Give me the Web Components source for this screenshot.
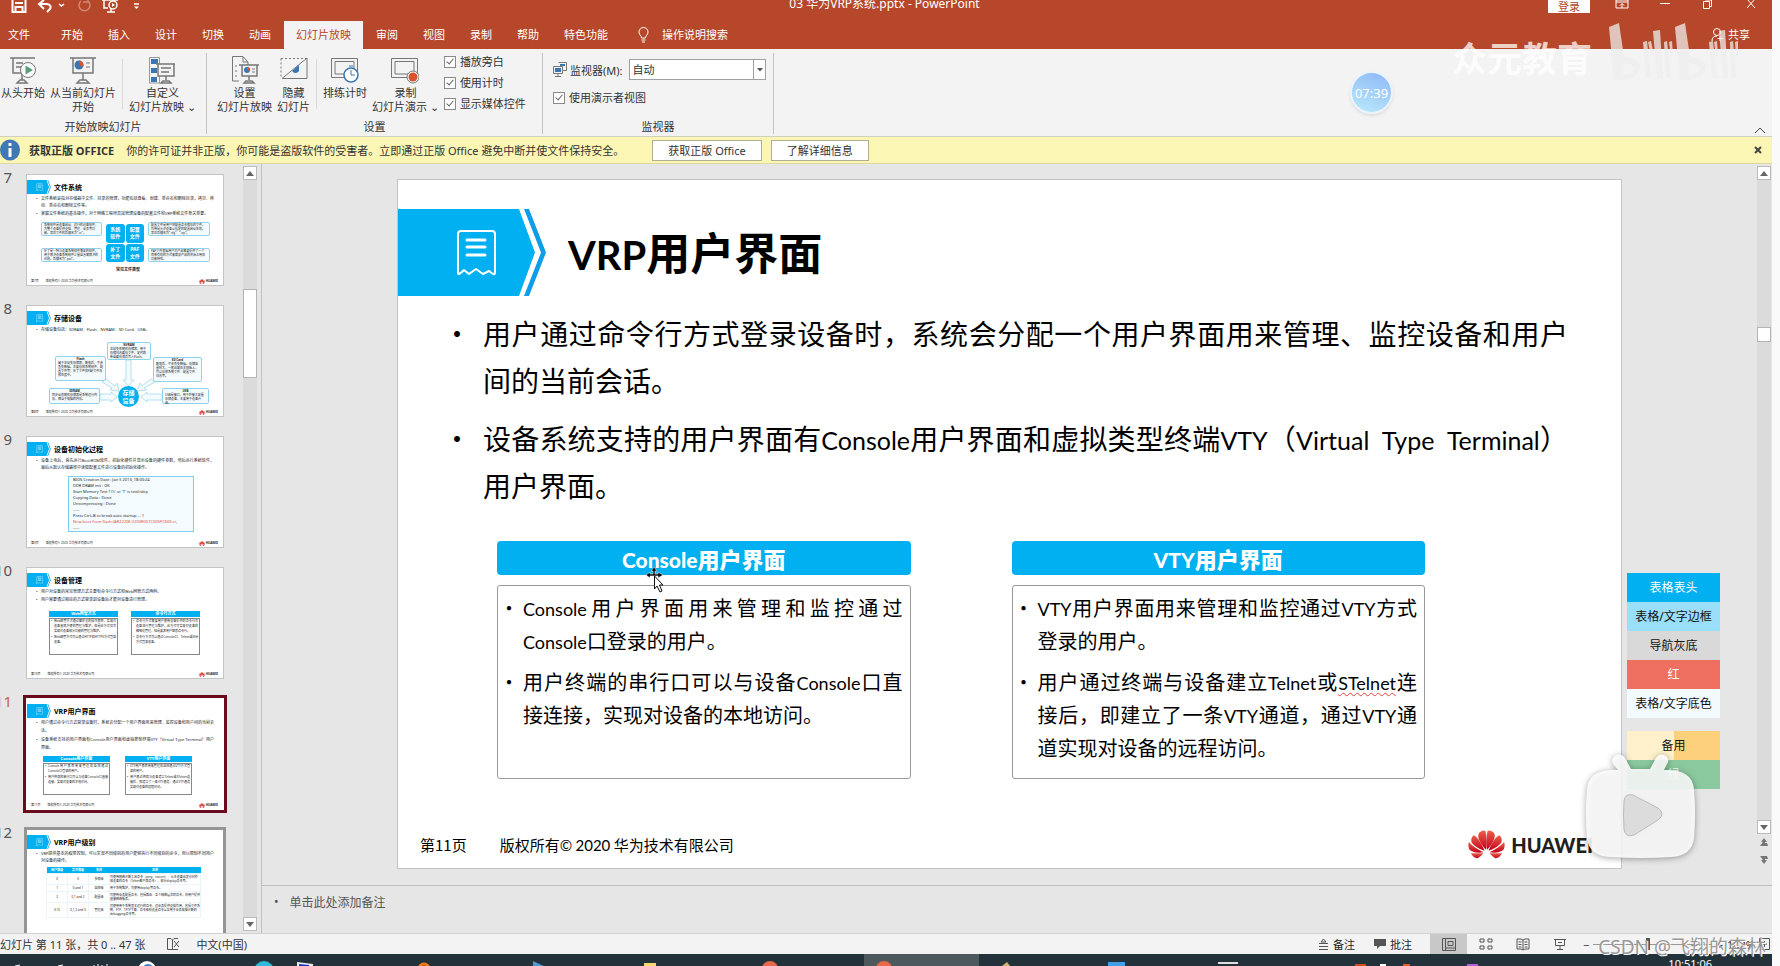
<!DOCTYPE html>
<html lang="zh-CN">
<head>
<meta charset="utf-8">
<title>03 华为VRP系统.pptx - PowerPoint</title>
<style>
  body {
    margin: 0;
    background: #fafafa;
    font-family: "Noto Sans", "Noto Sans CJK SC", sans-serif;
    font-size: 11px;
    color: #333;
  }
</style>
</head>
<body>
<ppt-app></ppt-app>

<script>
// Registers a custom element whose shadow root is cloned from one template
function define(name, css, html) {
  const template = document.createElement("template");
  template.innerHTML = `<style>* { box-sizing: border-box; } ${css}</style>${html}`;
  customElements.define(name, class extends HTMLElement {
    constructor() {
      super();
      const shadow = this.attachShadow({mode: "open"});
      shadow.appendChild(template.content.cloneNode(true));
    }
  });
}

/* ---------- title bar and tabs ---------- */

define("title-bar", `
  :host {
    display: flex;
    align-items: center;
    height: 21px;
    padding: 0 14px 0 11px;
    color: #fff;
  }
  svg { display: block; fill: none; stroke: #fff; stroke-width: 1.5; }
  .quick, .window { flex: 1; display: flex; align-items: flex-start; height: 21px; }
  .quick { gap: 8px; }
  .window { justify-content: flex-end; gap: 29px; }
  .name { height: 21px; font-size: 12px; line-height: 8px; white-space: pre; }
  button { padding: 0; border: 0; background: none; font: inherit; }
  .login {
    width: 42px;
    height: 13px;
    margin-right: -4px;
    background: #fff;
    color: #b7472a;
    line-height: 10px;
  }
`, `
  <div class="quick">
    <button aria-label="保存"><svg width="16" height="14"><path d="M1.500 0V12H14.500V0M4.500 12V7H11.500V12M4 3H12" stroke-width="2"/></svg></button>
    <button aria-label="撤消"><svg width="32" height="14"><path d="M9 0L4 4L9 9M4 4H12Q17 5 15 9L12 12" stroke-width="2"/><path d="M24 4L26.500 6L29 4"/></svg></button>
    <button aria-label="恢复"><svg width="18" height="14" opacity=".35"><path d="M13 1A5.500 5.500 0 1 1 6 1M13 -3V2H8"/></svg></button>
    <button aria-label="从头开始"><svg width="20" height="14"><path d="M1 0H17M3 0V8H7M6 12H14M10 12V8"/><circle cx="12" cy="5" r="4"/><path d="M11 3V7L14 5Z" fill="#fff" stroke="none"/></svg></button>
    <button aria-label="自定义快速访问工具栏"><svg width="14" height="14"><path d="M5 4H10"/><path d="M5 6.500H10L7.500 9Z" fill="#fff" stroke="none"/></svg></button>
  </div>
  <div class="name">03 华为VRP系统.pptx - PowerPoint</div>
  <div class="window">
    <button class="login">登录</button>
    <button aria-label="功能区显示选项"><svg width="14" height="14"><path d="M1 0H13V8H1ZM1 2H13M7 8V4M5 5.500L7 3.500L9 5.500" stroke-width="1"/></svg></button>
    <button aria-label="最小化"><svg width="14" height="14"><path d="M2 3.500H12" stroke-width="1"/></svg></button>
    <button aria-label="还原"><svg width="14" height="14"><path d="M2.500 1.500H8.500V8.500H2.500ZM4.500 0H10.500V6.500H9" stroke-width="1"/></svg></button>
    <button aria-label="关闭"><svg width="14" height="14"><path d="M3 -1L11 8M11 -1L3 8" stroke-width="1"/></svg></button>
  </div>
`);

define("tab-strip", `
  :host {
    display: flex;
    align-items: stretch;
    gap: 1px;
    height: 28px;
    padding-right: 22px;
    color: #fff;
  }
  svg { fill: none; stroke: #fff; }
  button {
    display: flex;
    align-items: center;
    padding: 0 12px;
    border: 0;
    background: none;
    color: inherit;
    font: inherit;
    line-height: 26px;
    white-space: nowrap;
  }
  .file { padding: 0 18px 0 8px; }
  .active { background: #f3f3f3; color: #b7472a; }
  .tell { gap: 13px; padding-left: 17px; }
  .share { gap: 4px; margin-left: auto; padding: 0; }
`, `
  <button class="file">文件</button>
  <button>开始</button>
  <button>插入</button>
  <button>设计</button>
  <button>切换</button>
  <button>动画</button>
  <button class="active">幻灯片放映</button>
  <button>审阅</button>
  <button>视图</button>
  <button>录制</button>
  <button>帮助</button>
  <button>特色功能</button>
  <button class="tell">
    <svg width="11" height="16"><path d="M3.500 11C3.500 8.500 1 8 1 5A4.500 4.500 0 0 1 10 5C10 8 7.500 8.500 7.500 11ZM3.500 13H7.500M4 15H7"/></svg>操作说明搜索
  </button>
  <button class="share">
    <svg width="13" height="14"><circle cx="6" cy="4" r="3.500"/><path d="M1 13Q1 8 6 8M9 8V13M6.500 10.500H12"/></svg>共享
  </button>
`);

/* ---------- ribbon ---------- */

define("ribbon-button", `
  :host { display: block; }
  button {
    display: flex;
    flex-direction: column;
    align-items: center;
    padding: 0;
    border: 0;
    background: none;
    color: inherit;
    font: inherit;
    line-height: 14px;
    text-align: center;
    white-space: nowrap;
  }
  .icon { height: 30px; }
`, `<button><span class="icon"><slot name="icon"></slot></span><slot></slot></button>`);

define("ribbon-check", `
  :host { display: block; }
  label { display: flex; align-items: center; gap: 4px; line-height: 14px; white-space: nowrap; }
  input {
    appearance: none;
    flex: none;
    width: 12px;
    height: 12px;
    margin: 0;
    border: 1px solid #8a8a8a;
    background: #fff;
  }
  input:checked::after {
    content: "";
    display: block;
    width: 3px;
    height: 6px;
    margin: 0 0 0 3px;
    border: solid #666;
    border-width: 0 1px 1px 0;
    transform: rotate(40deg);
  }
`, `<label><input type="checkbox" checked><slot></slot></label>`);

define("ribbon-group", `
  :host {
    display: flex;
    flex-direction: column;
    justify-content: space-between;
    height: 81px;
    border-right: 1px solid #c4c4c4;
  }
  .tools { display: flex; align-items: flex-start; padding-top: 3px; }
  .label { line-height: 14px; text-align: center; }
`, `<div class="tools"><slot></slot></div><div class="label"><slot name="label"></slot></div>`);

define("ribbon-bar", `
  :host {
    display: flex;
    height: 88px;
    padding: 4px 5px 0 0;
    border-bottom: 1px solid #d0d0c0;
    background: #f3f3f3;
    color: #333;
  }
  svg { display: block; fill: none; stroke: #777; }
  .line { width: 1px; height: 50px; margin: 3px 6px 0; background: #d8d8d8; }
  .start { width: 207px; }
  .setup { width: 336px; }
  .screen { width: 231px; }
  .first { padding-left: 1px; }
  .lead { padding-left: 10px; }
  .next { margin-left: 5px; }
  .stack { display: flex; flex-direction: column; gap: 7px; padding-left: 5px; margin-top: -1px; }
  .monitor { display: flex; flex-direction: column; gap: 11px; padding: 3px 7px 0 10px; width: 100%; }
  .row { display: flex; align-items: center; gap: 3px; white-space: nowrap; }
  .pick { flex: 1; display: grid; grid-template-columns: 1fr 12px; margin-left: 3px; height: 21px; border: 1px solid #a0a0a0; background: #fff; }
  select { grid-area: 1 / 1 / 2 / 3; appearance: none; padding: 0 3px; border: 0; background: none; color: #333; font: inherit; }
  .drop { grid-area: 1 / 2; display: grid; place-items: center; border-left: 1px solid #a0a0a0; pointer-events: none; }
  .collapse { margin: auto 0 2px auto; padding: 0; border: 0; background: none; }
`, `
  <ribbon-group class="start">
    <ribbon-button class="first"><svg slot="icon" width="28" height="28"><path d="M1 2H26M4 2V17H14M13 18V24M8 27L11 24H15L18 27ZM7 7H14M7 11H12" stroke-width="1.500"/><circle cx="19" cy="14" r="7.500" fill="#fff"/><path d="M16.500 9.500V18.500L24 14Z" fill="#5a9c7c" stroke="none"/></svg>从头开始</ribbon-button>
    <ribbon-button class="next"><svg slot="icon" width="28" height="28"><path d="M1 2H27M4 2V17H24V2M14 17V24M8 27L11 24H17L20 27Z" stroke-width="1.500"/><circle cx="10" cy="9" r="4.500" fill="#3c76b0" stroke="none"/><path d="M10 9V4.500A4.500 4.500 0 0 1 14 11Z" fill="#d8532f" stroke="none"/><path d="M17 7H21M17 11H21"/></svg>从当前幻灯片<br>开始</ribbon-button>
    <div class="line"></div>
    <ribbon-button><svg slot="icon" width="28" height="28"><path d="M1.500 1.500H11.500V27H1.500Z" stroke="#999"/><path d="M3 3H10V8H3ZM3 12H9V17H3ZM3 21H9V26H3Z" fill="#3c76b0" stroke="none"/><path d="M8 8H27M10 8V20H26V8M18 20V24M13 27L15 25H21L23 27ZM13 12H23M13 16H21" stroke-width="1.500" fill="#f3f3f3"/></svg>自定义<br>幻灯片放映 ⌄</ribbon-button>
    <span slot="label">开始放映幻灯片</span>
  </ribbon-group>

  <ribbon-group class="setup">
    <ribbon-button class="lead"><svg slot="icon" width="28" height="28"><path d="M1.500 25V.5H12L17 6V9M12 1V6H17M1.500 25H8M4 10H6M4 15H6M4 20H6"/><path d="M8 9H28M11 9V20H26V9M18 20V24M13 27L15 25H21L23 27Z" stroke-width="1.500" fill="#f3f3f3"/><circle cx="16" cy="14" r="3" fill="#3c76b0" stroke="none"/><path d="M16 14V11A3 3 0 0 1 19 15Z" fill="#d8532f" stroke="none"/><path d="M21 13H24M21 16H24"/></svg>设置<br>幻灯片放映</ribbon-button>
    <ribbon-button class="next"><svg slot="icon" width="28" height="28"><path d="M1 2.500H27M1 2.500V22" stroke-dasharray="2 2"/><path d="M27 2V22.500H2L27 2"/><path d="M12 15L19 9V15A4 4 0 0 1 12 15Z" fill="#3c76b0" stroke="none"/></svg>隐藏<br>幻灯片</ribbon-button>
    <div class="line"></div>
    <ribbon-button><svg slot="icon" width="28" height="28"><path d="M.5 2.500H26.500V21.500H.5ZM4 5.500H23V18H4Z"/><circle cx="20" cy="19" r="7" fill="#fff" stroke="#3c76b0" stroke-width="1.500"/><path d="M20 19V14M20 19H24M18 10H22" stroke="#3c76b0"/></svg>排练计时</ribbon-button>
    <ribbon-button class="next"><svg slot="icon" width="28" height="28"><path d="M.5 2.500H26.500V21.500H.5ZM4 5.500H23V18H4Z"/><circle cx="22" cy="21" r="6" fill="#fff"/><circle cx="22" cy="21" r="4.500" fill="#d8532f" stroke="none"/></svg>录制<br>幻灯片演示 ⌄</ribbon-button>
    <div class="stack">
      <ribbon-check>播放旁白</ribbon-check>
      <ribbon-check>使用计时</ribbon-check>
      <ribbon-check>显示媒体控件</ribbon-check>
    </div>
    <span slot="label">设置</span>
  </ribbon-group>

  <ribbon-group class="screen">
    <div class="monitor">
      <div class="row">
        <svg width="14" height="15"><path d="M5.500 .5H13.500V8.500H10M.5 4.500H9.500V11.500H.5ZM2 14.500H8M5 12V14" fill="#f3f3f3"/><path d="M7 2H12V4H7ZM2 6H8V10H2Z" fill="#3c76b0" stroke="none"/></svg>
        <label for="monitor">监视器(M):</label>
        <div class="pick">
          <select id="monitor"><option>自动</option></select>
          <span class="drop"><svg width="6" height="4"><path d="M0 0H6L3 3.500Z" fill="#555" stroke="none"/></svg></span>
        </div>
      </div>
      <ribbon-check>使用演示者视图</ribbon-check>
    </div>
    <span slot="label">监视器</span>
  </ribbon-group>

  <button class="collapse" aria-label="折叠功能区"><svg width="14" height="8"><path d="M2 7L7 2L12 7" stroke="#444"/></svg></button>
`);

define("message-bar", `
  :host {
    display: flex;
    align-items: center;
    height: 27px;
    padding-right: 8px;
    border-bottom: 1px solid #dcd9a0;
    background: #fbf6b4;
    white-space: nowrap;
  }
  svg { display: block; }
  strong { margin: 0 12px 0 8px; }
  button {
    height: 21px;
    padding: 0 15px;
    border: 1px solid #b0ad90;
    background: #fff;
    color: #333;
    font: inherit;
  }
  .buy { margin: 0 9px 0 28px; }
  .close { margin-left: auto; padding: 0; border: 0; background: none; }
`, `
  <svg width="21" height="22"><ellipse cx="10" cy="11" rx="10" ry="10.500" fill="#3f78b5"/><path d="M10 4V7M10 9V18" stroke="#fff" stroke-width="3"/></svg>
  <strong>获取正版 OFFICE</strong>
  <span>你的许可证并非正版，你可能是盗版软件的受害者。立即通过正版 Office 避免中断并使文件保持安全。</span>
  <button class="buy">获取正版 Office</button>
  <button>了解详细信息</button>
  <button class="close" aria-label="关闭"><svg width="12" height="12"><path d="M3 3L9 9M9 3L3 9" stroke="#444" stroke-width="2"/></svg></button>
`);

/* ---------- shared pieces ---------- */

define("scroll-bar", `
  :host {
    flex: none;
    display: flex;
    flex-direction: column;
    width: 14px;
    background: #dbdbdb;
  }
  button {
    flex: none;
    display: grid;
    place-items: center;
    width: 14px;
    height: 14px;
    padding: 0;
    border: 1px solid #bbb;
    background: #fff;
  }
  svg { fill: #666; }
  .thumb { height: var(--size); margin-top: var(--start); border: 1px solid #b4b4b4; background: #fff; }
  .down { margin-top: auto; }
`, `
  <button aria-label="向上"><svg width="8" height="5"><path d="M0 5L4 0L8 5Z"/></svg></button>
  <div class="thumb"></div>
  <button class="down" aria-label="向下"><svg width="8" height="5"><path d="M0 0H8L4 5Z"/></svg></button>
`);

define("huawei-flower", `
  :host { display: block; }
  svg { display: block; width: 100%; height: 100%; }
`, `
  <svg viewBox="0 0 38 29">
    <defs><linearGradient id="petal" x1="0" y1="0" x2="0" y2="1"><stop offset="0" stop-color="#e8604c"/><stop offset="1" stop-color="#c4001a"/></linearGradient></defs>
    <g fill="url(#petal)">
      <path d="M18.500 20C13 14 8 6 12 2Q16 -1 18 1Q20 10 18.500 20Z"/><path d="M19.500 20C25 14 30 6 26 2Q22 -1 20 1Q18 10 19.500 20Z"/>
      <path d="M17 21C14 13 9 6 6 5Q2 8 4 13Q8 18 17 21Z"/><path d="M21 21C24 13 29 6 32 5Q36 8 34 13Q30 18 21 21Z"/>
      <path d="M16 22.500Q6 18 1 12Q-1 18 3 21Q8 24 16 22.500Z"/><path d="M22 22.500Q32 18 37 12Q39 18 35 21Q30 24 22 22.500Z"/>
      <path d="M16 23.500L3 23.500Q6 29 10 28.500Q13 27 16 23.500Z"/><path d="M22 23.500L35 23.500Q32 29 28 28.500Q25 27 22 23.500Z"/>
    </g>
  </svg>
`);

define("title-badge", `
  :host { display: block; }
  svg { display: block; width: 100%; height: 100%; }
`, `
  <svg viewBox="0 0 149 87">
    <path d="M0 0H121L137 43.500L121 87H0Z" fill="#00b0f0"/>
    <path d="M126 0H131L148 43.500L131 87H126L143 43.500Z" fill="#0f9de8"/>
    <g fill="none" stroke="#fff" stroke-width="2" stroke-linecap="round" stroke-linejoin="round">
      <path d="M60 64V25Q60 22 63 22H94Q97 22 97 25V64Q97 67 91 62L85 65L78 60L71 65L66 61Q60 67 60 64Z"/>
      <path d="M69 31H87M69 38H87M69 46H87" stroke-width="3"/>
    </g>
  </svg>
`);

/* ---------- slide thumbnails ---------- */

define("slide-thumb", `
  :host { display: flex; gap: 14px; height: 112px; }
  .number { flex: none; width: 12px; display: flex; justify-content: flex-end; font-size: 15px; line-height: 6px; color: #555; }
  article {
    flex: none;
    position: relative;
    display: flex;
    flex-direction: column;
    width: 198px;
    height: 112px;
    border: 1px solid #c4c4c4;
    background: #fff;
    color: #222;
    font-size: 4px;
    line-height: 7px;
  }
  header { display: flex; align-items: center; gap: 3px; height: 14px; margin-top: 5px; font-size: 7px; font-weight: bold; color: #000; }
  title-badge { width: 24px; height: 14px; }
  .content { flex: 1; min-height: 0; padding: 1px 9px 0 14px; }
  footer { display: flex; align-items: center; gap: 7px; height: 8px; padding: 0 5px 0 4px; font-size: 3px; line-height: 6px; }
  .brand { display: flex; align-items: center; gap: 1px; margin-left: auto; font-weight: bold; }
  huawei-flower { width: 6px; height: 5px; }
  :host([current]) .number { color: #d0613f; }
  :host([current]) article { outline: 3px solid #6a0a1c; border-color: #fff; }
  :host([hover]) article { outline: 2px solid #959595; border-color: #959595; }
`, `
  <div class="number"><slot name="number"></slot></div>
  <article>
    <header><title-badge></title-badge><slot name="title"></slot></header>
    <div class="content"><slot></slot></div>
    <footer><slot name="page"></slot><span>版权所有© 2020 华为技术有限公司</span><div class="brand"><huawei-flower></huawei-flower>HUAWEI</div></footer>
  </article>
`);

define("thumb-pane", `
  :host { display: flex; width: 262px; min-height: 0; border-right: 1px solid #c0c0c0; background: #e6e6e6; }
  .list { flex: 1; display: flex; flex-direction: column; gap: 19px; min-height: 0; overflow: hidden; padding-top: 10px; }
  scroll-bar { --start: 109px; --size: 89px; margin: 2px 4px 2px 0; }
  ul { margin: 0 0 2px; padding: 0; list-style: none; text-align: justify; }
  li { position: relative; margin-bottom: 1px; }
  li::before { content: "•"; position: absolute; left: -5px; }
  .airy li { line-height: 8px; }
  .box { padding: 0 2px; border: 1px solid #8fd3ea; border-radius: 2px; background: #f4fbfe; font-size: 3px; line-height: 4px; }
  .files { display: grid; grid-template-columns: 61px 38px 62px; gap: 12px 4px; padding-top: 3px; }
  .files .box { height: 14px; }
  .quad { grid-area: 1 / 2 / 3 / 3; display: grid; grid-template-columns: 1fr 1fr; gap: 1px; margin-top: 2px; }
  .quad b { display: grid; place-items: center; border-radius: 3px; background: #00b0f0; color: #fff; font-size: 5px; line-height: 7px; text-align: center; }
  .caption { margin: 4px 0 0 75px; font-weight: bold; }
  .node { position: absolute; }
  .node b { display: block; text-align: center; }
  .hub { position: absolute; left: 91px; top: 80px; display: grid; place-items: center; width: 21px; height: 21px; border-radius: 50%; background: #00b0f0; color: #fff; font-size: 6px; line-height: 8px; font-weight: bold; text-align: center; }
  .arrows { position: absolute; left: 0; top: 0; fill: #f4fbfe; stroke: #b4dfee; }
  .code { width: 126px; margin: 5px 0 0 27px; padding: 0 4px; border: 1px solid #7fcdec; background: #f4fbfe; font-size: 4px; line-height: 6px; }
  .red { color: #e05040; }
  .pair { display: flex; gap: 13px; padding: 6px 0 0 8px; }
  .pair.near { gap: 15px; padding: 2px 0 0 2px; }
  .pair section { width: 69px; }
  .pair.near section { width: 67px; }
  .pair h4 { margin: 0 0 1px; background: #00b0f0; color: #fff; font-size: 4px; line-height: 6px; text-align: center; }
  .pair ul { height: 37px; margin: 0; padding: 0 1px 0 4px; border: 1px solid #888; font-size: 3px; }
  .near ul { height: 32px; }
  .pair li { line-height: 5px; }
  .pair li::before { left: -3px; }
  table { table-layout: fixed; width: 155px; margin: 3px 0 0 5px; border-collapse: collapse; font-size: 3px; line-height: 4px; }
  th { padding: 1px 0; background: #00b0f0; color: #fff; }
  th:nth-child(-n+3) { width: 21px; }
  td { padding: 1px 0; border: 1px solid #eaf5fa; text-align: center; }
  td:last-child { text-align: left; }
`, `
  <div class="list">
    <slide-thumb>
      <span slot="number">7</span><span slot="title">文件系统</span><span slot="page">第7页</span>
      <ul>
        <li>文件系统是指对存储器中文件、目录的管理，功能包括查看、创建、重命名和删除目录，拷贝、移动、重命名和删除文件等。</li>
        <li>掌握文件系统的基本操作，对于网络工程师高效管理设备的配置文件和VRP系统文件至关重要。</li>
      </ul>
      <div class="files">
        <div class="box">系统软件是设备启动、运行的必备软件，为整个设备提供支撑、管理、业务等功能。常见文件的后缀名为“.cc”。</div>
        <div class="quad"><b>系统<br>软件</b><b>配置<br>文件</b><b>补丁<br>文件</b><b>PAF<br>文件</b></div>
        <div class="box">配置文件是用户将配置命令保存的文件，作用是允许设备以指定的配置启动生效。常见后缀名为“.cfg”、“.zip”。</div>
        <div class="box">补丁是一种与设备系统软件兼容的软件，用于解决设备系统软件少量且急需解决的问题。后缀名为“.pat”。</div>
        <div class="box">PAF文件根据用户对产品需要提供了一个简单有效的方式来裁剪产品的资源占用和功能特性。</div>
      </div>
      <div class="caption">常见文件类型</div>
    </slide-thumb>

    <slide-thumb>
      <span slot="number">8</span><span slot="title">存储设备</span><span slot="page">第8页</span>
      <ul><li>存储设备包括：SDRAM、Flash、NVRAM、SD Card、USB。</li></ul>
      <svg class="arrows" width="196" height="110"><path d="M99 54H104V74H107L101.500 80L96 74H99ZM75 76L79 73L88 80L90 77L92 85L83 84L85 82ZM128 76L124 73L115 80L113 77L110 85L120 84L117 82ZM73 88H84V86L90 91L84 96V94H73ZM135 88H120V86L114 91L120 96V94H135Z"/></svg>
      <div class="box node" style="left:80px;top:36px;width:44px;height:18px"><b>NVRAM</b>非易失性随机存储器，用于存储日志缓存文件，定时刷新或缓存满后写入Flash。</div>
      <div class="box node" style="left:28px;top:50px;width:51px;height:25px"><b>Flash</b>属于非易失存储器，断电后，不会丢失数据。主要存放系统软件、配置文件等；补丁文件和PAF文件存放在其中。</div>
      <div class="box node" style="left:126px;top:51px;width:49px;height:25px"><b>SD Card</b>断电后，不会丢失数据。存储容量较大，一般出现在主控板上，可以存放系统文件、配置文件、日志等。</div>
      <div class="box node" style="left:22px;top:82px;width:51px;height:16px"><b>SDRAM</b>同步动态随机存储器是系统运行内存，相当于电脑的内存。</div>
      <div class="box node" style="left:135px;top:82px;width:47px;height:16px"><b>USB</b>USB是接口，用于外接大容量存储设备，主要用于设备升级。</div>
      <div class="hub">存储<br>设备</div>
    </slide-thumb>

    <slide-thumb>
      <span slot="number">9</span><span slot="title">设备初始化过程</span><span slot="page">第9页</span>
      <ul><li>设备上电后，首先运行BootROM软件，初始化硬件并显示设备的硬件参数，然后运行系统软件，最后从默认存储路径中读取配置文件进行设备的初始化操作。</li></ul>
      <div class="code">BIOS Creation Date : Jan 5 2013, 18:00:24<br>DDR DRAM init : OK<br>Start Memory Test ? ('t' or 'T' is test):skip<br>Copying Data : Done<br>Uncompressing : Done<br>……<br>Press Ctrl+B to break auto startup ... 1<br><span class="red">Now boot from flash:/AR2220E-V200R007C00SPC600.cc,</span><br>……</div>
    </slide-thumb>

    <slide-thumb>
      <span slot="number">10</span><span slot="title">设备管理</span><span slot="page">第10页</span>
      <ul>
        <li>用户对设备的常见管理方式主要有命令行方式和Web网管方式两种。</li>
        <li>用户需要通过相应的方式登录到设备后才能对设备进行管理。</li>
      </ul>
      <div class="pair">
        <section><h4>Web网管方式</h4><ul><li>Web网管方式通过图形化的操作界面，实现对设备直观方便的管理与维护，但是此方式仅可实现对设备部分功能的管理与维护。</li><li>Web网管方式可以通过HTTP和HTTPS方式登录设备。</li></ul></section>
        <section><h4>命令行方式</h4><ul><li>命令行方式需要用户使用设备提供的命令行对设备进行管理与维护，此方式可实现对设备的精细化管理，但是要求用户熟悉命令行。</li><li>命令行方式可以通过Console口、Telnet或SSH方式登录设备。</li></ul></section>
      </div>
    </slide-thumb>

    <slide-thumb current>
      <span slot="number">11</span><span slot="title">VRP用户界面</span><span slot="page">第11页</span>
      <ul class="airy">
        <li>用户通过命令行方式登录设备时，系统会分配一个用户界面用来管理、监控设备和用户间的当前会话。</li>
        <li>设备系统支持的用户界面有Console用户界面和虚拟类型终端VTY（Virtual Type Terminal）用户界面。</li>
      </ul>
      <div class="pair near">
        <section><h4>Console用户界面</h4><ul><li>Console用户界面用来管理和监控通过Console口登录的用户。</li><li>用户终端的串行口可以与设备Console口直接连接，实现对设备的本地访问。</li></ul></section>
        <section><h4>VTY用户界面</h4><ul><li>VTY用户界面用来管理和监控通过VTY方式登录的用户。</li><li>用户通过终端与设备建立Telnet或STelnet连接后，即建立了一条VTY通道，通过VTY通道实现对设备的远程访问。</li></ul></section>
      </div>
    </slide-thumb>

    <slide-thumb hover>
      <span slot="number">12</span><span slot="title">VRP用户级别</span><span slot="page">第12页</span>
      <ul><li>VRP提供基本的权限控制，可以实现不同级别的用户能够执行不同级别的命令，用以限制不同用户对设备的操作。</li></ul>
      <table>
        <tr><th>用户等级</th><th>命令等级</th><th>名称</th><th>说明</th></tr>
        <tr><td>0</td><td>0</td><td>参观级</td><td>可使用网络诊断工具命令（ping、tracert）、从本设备出发访问外部设备的命令（Telnet客户端命令）、部分display命令等。</td></tr>
        <tr><td>1</td><td>0 and 1</td><td>监控级</td><td>用于系统维护，可使用display等命令。</td></tr>
        <tr><td>2</td><td>0,1 and 2</td><td>配置级</td><td>可使用业务配置命令，包括路由、各个网络层次的命令，向用户提供直接网络服务。</td></tr>
        <tr><td>3-15</td><td>0,1,2 and 3</td><td>管理级</td><td>可使用用于系统基本运行的命令，对业务提供支撑作用，包括文件系统、FTP、TFTP下载、命令级别设置命令以及用于业务故障诊断的debugging命令等。</td></tr>
      </table>
    </slide-thumb>
  </div>
  <scroll-bar></scroll-bar>
`);

/* ---------- the open slide ---------- */

define("info-card", `
  :host { flex: 1; display: flex; flex-direction: column; gap: 10px; }
  h3 { margin: 0; border-radius: 4px; background: #00b0f0; color: #fff; font-size: 22px; line-height: 34px; text-align: center; }
  ul { height: 194px; margin: 0; padding: 5px 7px 0 25px; border: 1px solid #999; border-radius: 3px; list-style: none; font-size: 20px; line-height: 33px; text-align: justify; }
`, `<h3><slot name="title"></slot></h3><ul><slot></slot></ul>`);

define("slide-page", `
  :host {
    flex: 1;
    display: flex;
    flex-direction: column;
    border: 1px solid #c4c4c4;
    background: #fff;
    color: #000;
    font-family: "Noto Sans CJK SC", sans-serif;
  }
  header { display: flex; align-items: center; gap: 21px; margin-top: 29px; }
  title-badge { width: 149px; height: 87px; }
  h2 { margin: 0; padding-bottom: 4px; font-size: 44px; line-height: 80px; }
  h2 .en { font-size: 40px; }
  .en { font-family: Lato, sans-serif; line-height: 1; }
  .main { margin: 14px 53px 32px 85px; padding: 0; list-style: none; font-size: 28px; line-height: 47px; text-align: justify; }
  .main > li { margin-bottom: 11px; }
  .main > li:last-child { margin-bottom: 0; }
  .main .en { font-size: 25px; }
  li { position: relative; }
  li::before { content: "•"; position: absolute; left: -40px; width: 28px; text-align: center; }
  .cards { display: flex; gap: 101px; padding: 0 196px 0 99px; }
  .cards li { margin-bottom: 8px; }
  .cards li::before { left: -24px; width: 20px; }
  .cards .en { font-size: 18px; }
  .cards b .en { font-size: 21px; }
  .typo { text-decoration: underline wavy #e04040 1px; text-underline-offset: 2px; }
  footer { display: flex; align-items: center; gap: 33px; margin-top: auto; padding: 0 28px 9px 22px; font-size: 15px; line-height: 28px; }
  footer .en { font-size: 15px; }
  .brand { display: flex; align-items: center; gap: 6px; margin-left: auto; font-family: Lato, sans-serif; font-size: 20px; font-weight: 900; color: #231f20; }
  huawei-flower { width: 37px; height: 29px; }
`, `
  <header>
    <title-badge></title-badge>
    <h2><span class="en">VRP</span>用户界面</h2>
  </header>
  <ul class="main">
    <li>用户通过命令行方式登录设备时，系统会分配一个用户界面用来管理、监控设备和用户间的当前会话。</li>
    <li>设备系统支持的用户界面有<span class="en">Console</span>用户界面和虚拟类型终端<span class="en">VTY</span>（<span class="en">Virtual&nbsp; Type&nbsp; Terminal</span>）用户界面。</li>
  </ul>
  <div class="cards">
    <info-card>
      <b slot="title"><span class="en">Console</span>用户界面</b>
      <li><span class="en">Console</span>用户界面用来管理和监控通过<span class="en">Console</span>口登录的用户。</li>
      <li>用户终端的串行口可以与设备<span class="en">Console</span>口直接连接，实现对设备的本地访问。</li>
    </info-card>
    <info-card>
      <b slot="title"><span class="en">VTY</span>用户界面</b>
      <li><span class="en">VTY</span>用户界面用来管理和监控通过<span class="en">VTY</span>方式登录的用户。</li>
      <li>用户通过终端与设备建立<span class="en">Telnet</span>或<span class="en typo">STelnet</span>连接后，即建立了一条<span class="en">VTY</span>通道，通过<span class="en">VTY</span>通道实现对设备的远程访问。</li>
    </info-card>
  </div>
  <footer>
    <span>第11页</span>
    <span>版权所有© <span class="en">2020</span> 华为技术有限公司</span>
    <div class="brand"><huawei-flower></huawei-flower>HUAWEI</div>
  </footer>
`);

define("colour-key", `
  :host { display: flex; flex-direction: column; justify-content: flex-end; width: 93px; margin: 0 37px 80px 5px; color: #111; font-size: 12px; line-height: 29px; text-align: center; }
  .head { background: #00b0f0; color: #fff; }
  .edge { background: #99dff9; }
  .nav { background: #d9d9d9; }
  .red { background: #ef7060; color: #fff; }
  .base { margin-bottom: 13px; background: #f2fafd; }
  .spare { background: linear-gradient(90deg, #fdf0cb 50%, #fdd07c 50%); }
  .green { background: #8ac99e; color: #fff; }
`, `
  <div class="head">表格表头</div>
  <div class="edge">表格/文字边框</div>
  <div class="nav">导航灰底</div>
  <div class="red">红</div>
  <div class="base">表格/文字底色</div>
  <div class="spare">备用</div>
  <div class="green">绿</div>
`);

define("slide-stage", `
  :host { position: relative; flex: 1; display: flex; min-height: 0; background: #e6e6e6; }
  .canvas { flex: 1; display: flex; padding: 15px 0 16px 135px; }
  .side { display: flex; flex-direction: column; padding: 2px 1px 18px 0; }
  scroll-bar { flex: 1; --start: 147px; --size: 15px; }
  .side svg { display: block; height: 16px; fill: #777; }
  .pages { margin-top: 1px; }
  .cursor { position: absolute; left: 384px; top: 403px; }
`, `
  <div class="canvas"><slide-page></slide-page><colour-key></colour-key></div>
  <div class="side">
    <scroll-bar></scroll-bar>
    <div class="pages">
      <svg width="14"><path d="M7 3L10 7H8V8H10L10 8L11 11H3L6 7H4Z"/></svg>
      <svg width="14"><path d="M7 13L10 9H8V8H11L10 5H3L6 9H4Z"/></svg>
    </div>
  </div>
  <svg class="cursor" width="18" height="26"><path d="M8 0L11 4H9V7H12V5L17 8L12 11V9H4V11L0 8L4 5V7H7V4H5Z" fill="#111" stroke="#fff" stroke-width=".5"/><path d="M8.500 9V22L11 19L14 25L16 24L13.500 18H17Z" fill="#fff" stroke="#111"/></svg>
`);

/* ---------- status bar and task bar ---------- */

define("status-bar", `
  :host { display: flex; align-items: center; height: 21px; padding-right: 2px; border-top: 1px solid #d2d2d2; background: #f3f3f3; white-space: nowrap; }
  svg { display: block; fill: none; stroke: #555; }
  button { display: flex; align-items: center; gap: 4px; height: 20px; padding: 0; border: 0; background: none; color: #222; font: inherit; }
  .spell { margin: 0 16px 0 21px; }
  .notes { margin: 0 19px 0 auto; }
  .comments { margin-right: 18px; }
  .view { justify-content: center; width: 37px; }
  .on { background: #c8c8c8; }
  .zoom { display: flex; align-items: center; gap: 4px; width: 192px; padding-left: 5px; }
  input { appearance: none; flex: 1; min-width: 0; height: 12px; margin: 0; background: linear-gradient(#999, #999) center / 100% 1px no-repeat; }
  input::-webkit-slider-thumb { appearance: none; width: 4px; height: 12px; background: #555; }
`, `
  <span>幻灯片 第 11 张，共 0 .. 47 张</span>
  <button class="spell" aria-label="拼写检查"><svg width="14" height="14"><path d="M6.500 3V12.500H1.500V1.500H5L6.500 3L8 1.500H12M8 4L13 10M13 4L8 10M6.500 12.500H12"/></svg></button>
  <span>中文(中国)</span>
  <button class="notes"><svg width="11" height="12"><path d="M1 5.500H10M1 8.500H10M1 11.500H10M3 4L5.500 1L8 4Z"/></svg>备注</button>
  <button class="comments"><svg width="12" height="12"><path d="M0 1H12V8H6L3 11V8H0Z" fill="#555" stroke="none"/></svg>批注</button>
  <button class="view on" aria-label="普通视图"><svg width="14" height="13"><path d="M.5 .5H13.500V12.500H.5ZM3.500 .5V12.500M6 3.500H11V7.500H6ZM4 10H13"/></svg></button>
  <button class="view" aria-label="幻灯片浏览"><svg width="14" height="12"><path d="M1 1H5V4H1ZM9 1H13V4H9ZM1 8H5V11H1ZM9 8H13V11H9Z"/></svg></button>
  <button class="view" aria-label="阅读视图"><svg width="14" height="13"><path d="M7 2V12L5 11H1V1H5L7 2L9 1H13V11H9L7 12M2.500 4H5.500M2.500 6.500H5.500M8.500 4H11.500M8.500 6.500H11.500M8.500 9H11.500M2.500 9H5.500"/></svg></button>
  <button class="view" aria-label="幻灯片放映"><svg width="14" height="13"><path d="M1 1.500H13M2.500 1.500V7.500H11.500V1.500M7 8V11M4 11.500H10M5 4.500H9"/></svg></button>
  <div class="zoom">
    <span>−</span><input type="range" aria-label="缩放" value="46"><span>+</span><span>102%</span>
    <svg width="11" height="12"><path d="M.5 .5H10.500V11.500H.5ZM3 6H8M5.500 3V9"/></svg>
  </div>
`);

define("task-bar", `
  :host { display: block; height: 12px; overflow: hidden; background: #22313a; color: #fff; }
  .row { display: flex; justify-content: space-between; }
  svg { display: block; flex: none; }
  time { margin-right: 60px; font-size: 11px; line-height: 19px; }
`, `
  <div class="row">
    <svg width="1500" height="12">
      <rect x="864" width="115" height="12" fill="#4c585c"/>
      <path d="M15 12L20 11M58 12L63 11M94 12V11M98 12V10M102 12V11M107 12V10" stroke="#fff" stroke-width="1"/>
      <circle cx="147" cy="16" r="9" fill="#fff"/><circle cx="148" cy="16" r="6" fill="#3f7fd0"/>
      <circle cx="264" cy="17" r="10" fill="#2fb8d8"/>
      <path d="M297 8L313 10V12H297Z" fill="#eee"/><path d="M299 10L309 11V12H299Z" fill="#1438c0"/>
      <circle cx="424" cy="15" r="5" fill="none" stroke="#ee7a1a" stroke-width="3"/>
      <path d="M533 7L546 13H533Z" fill="#4a9ad4"/>
      <path d="M644 9H656V12H644Z" fill="#f3d574"/>
      <circle cx="770" cy="15" r="8" fill="#e8694a"/><circle cx="884" cy="15" r="8" fill="#e8694a"/>
      <path d="M1002 12L1007 8L1010 12Z" fill="#d8b070"/>
      <path d="M1108 8H1125V12H1108Z" fill="#3f9fe8"/>
      <path d="M1218 9H1238" stroke="#ddd" stroke-width="2"/>
      <path d="M1355 11H1366" stroke="#d84a1a" stroke-width="2"/><path d="M1380 11H1386" stroke="#fff" stroke-width="2"/><path d="M1403 11H1410" stroke="#e86020" stroke-width="2"/><path d="M1467 11H1478" stroke="#b060d8" stroke-width="2"/>
    </svg>
    <time>10:51:06</time>
  </div>
`);

/* ---------- overlays ---------- */

define("video-marks", `
  :host { display: block; position: absolute; inset: 0; pointer-events: none; }
  .brand { position: absolute; top: 23px; right: 33px; display: flex; align-items: flex-start; gap: 17px; color: rgba(255, 255, 255, .75); font-size: 35px; font-weight: bold; line-height: 72px; }
  .logo { fill: rgba(238, 238, 238, .75); }
  .timer { position: absolute; top: 71px; right: 379px; display: grid; place-items: center; width: 43px; height: 43px; border: 2px solid #edf3fb; border-radius: 50%; background: linear-gradient(200deg, #8db9f7, #a9d5fa 60%, #b8ecfc); box-shadow: 0 2px 3px #ddd; color: #fff; font-size: 13px; }
  .play { position: absolute; right: 74px; bottom: 107px; filter: drop-shadow(0 1px 3px rgba(0, 0, 0, .4)); }
  .author { position: absolute; right: 6px; bottom: 5px; color: #999; font-size: 19px; line-height: 28px; text-shadow: 1px 1px 0 #fff; white-space: nowrap; }
`, `
  <div class="brand">众元教育
    <svg class="logo" width="130" height="58">
      <path d="M0 4L10 0L15 34Q31 35 31 45Q28 58 5 57ZM13 40L14 52Q24 51 26 45Q22 40 13 40Z" fill-rule="evenodd"/>
      <path d="M66 4L76 0L81 34Q97 35 97 45Q94 58 71 57ZM79 40L80 52Q90 51 92 45Q88 40 79 40Z" fill-rule="evenodd"/>
      <path d="M34 19L38 18L42 55H37ZM39 19L42 18L45 33H42ZM44 8L51 7L54 55H48ZM55 19L58 18L62 55H57ZM60 19L63 18L64 33H62ZM100 19L104 18L108 55H103ZM105 19L108 18L109 33H107ZM110 8L116 7L119 55H114ZM121 19L124 18L127 55H122ZM126 19L129 18V33H127Z"/>
    </svg>
  </div>
  <div class="timer">07:39</div>
  <svg class="play" width="116" height="108">
    <path d="M34 4Q40 2 43 7L49 18H68L74 7Q78 1 84 5Q88 9 85 13L82 19Q111 18 112 39Q114 62 112 87Q110 105 89 106Q60 108 28 106Q7 105 5 87Q3 62 5 39Q6 20 29 19H36L31 13Q28 8 34 4Z" fill="#fff" fill-opacity=".87"/>
    <path d="M42 50Q43 42 51 44L76 57Q84 63 76 69L52 84Q43 87 42 78Q41 64 42 50Z" fill="#dcdcdc" stroke="#bbb"/>
  </svg>
  <div class="author">CSDN @飞翔的森林</div>
`);

/* ---------- window ---------- */

define("ppt-app", `
  :host { position: relative; display: flex; flex-direction: column; height: 100vh; margin-right: 8px; overflow: hidden; background: #e6e6e6; }
  .top { background: #b7472a; }
  main { flex: 1; display: flex; min-height: 0; }
  .work { flex: 1; display: flex; flex-direction: column; min-width: 0; }
  .notes { display: flex; align-items: center; gap: 11px; height: 48px; padding: 0 0 16px 12px; border-top: 1px solid #c0c0c0; font-size: 12px; color: #555; }
`, `
  <div class="top"><title-bar></title-bar><tab-strip></tab-strip></div>
  <ribbon-bar></ribbon-bar>
  <message-bar></message-bar>
  <main>
    <thumb-pane></thumb-pane>
    <div class="work">
      <slide-stage></slide-stage>
      <div class="notes"><span>•</span><span>单击此处添加备注</span></div>
    </div>
  </main>
  <status-bar></status-bar>
  <task-bar></task-bar>
  <video-marks></video-marks>
`);
</script>
</body>
</html>
